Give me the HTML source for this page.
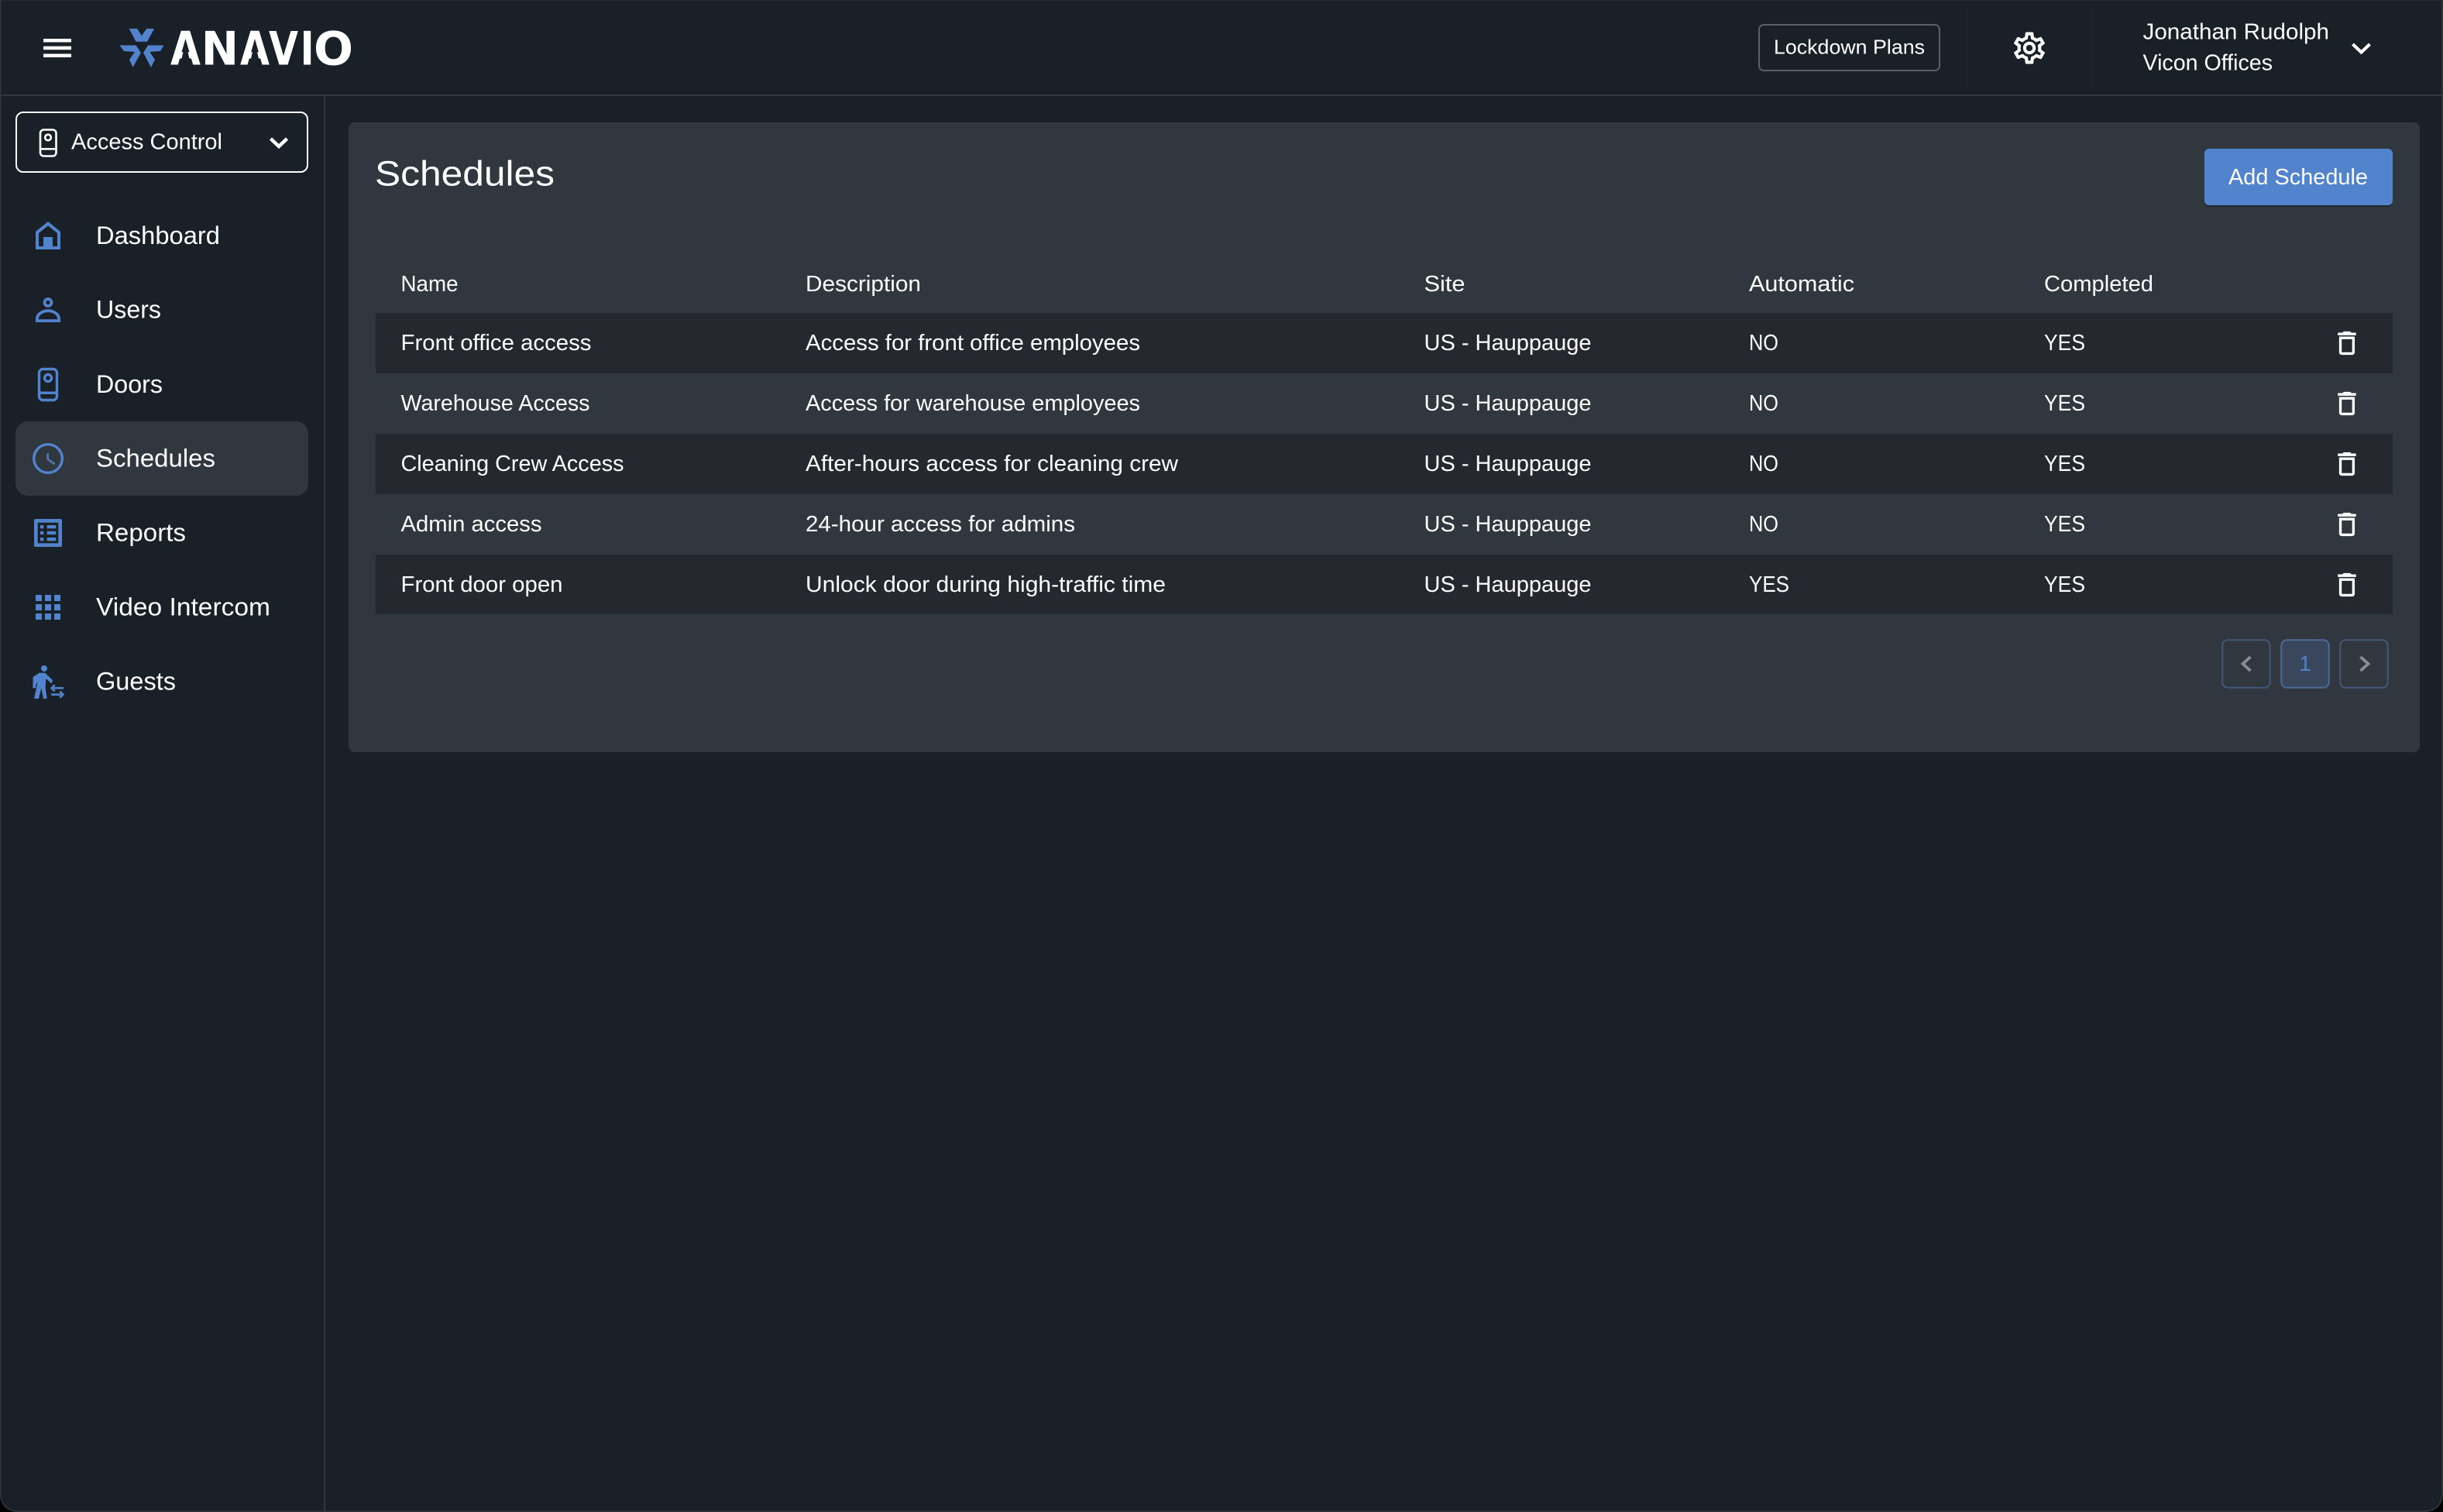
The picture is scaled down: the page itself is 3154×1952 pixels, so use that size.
<!DOCTYPE html>
<html lang="en">
<head>
<meta charset="utf-8">
<title>Anavio - Schedules</title>
<style>
html,body{margin:0;padding:0;background:#000;width:3154px;height:1952px;overflow:hidden}
svg{display:block}
text{font-family:"Liberation Sans",sans-serif;fill:#fff}
.t{font-size:28.5px}
.n{font-size:32px}
.logo text{font-family:"DejaVu Sans",sans-serif;font-weight:700;font-size:60px}
</style>
</head>
<body>
<svg xmlns="http://www.w3.org/2000/svg" width="3154" height="1952" viewBox="0 0 3154 1952">
<defs>
<path id="trash" d="M6 19c0 1.100.9 2 2 2h8c1.100 0 2-.9 2-2V7H6v12zM8 9h8v10H8V9zm7.500-5l-1-1h-5l-1 1H5v2h14V4z" fill="#fff"/>
</defs>

<!-- frame -->
<path d="M0 0H3154V1930a22 22 0 0 1-22 22H22a22 22 0 0 1-22-22Z" fill="#1a2028"/>
<path d="M.75 0V1930a21 21 0 0 0 21 21H3132a21 21 0 0 0 21-21V0" fill="none" stroke="#30363e" stroke-width="1.500"/>
<rect x="0" y="0" width="3154" height="1" fill="#242a32"/>
<rect x="0" y="122" width="3154" height="2" fill="#31373f"/>
<rect x="418" y="124" width="2" height="1828" fill="#30363e"/>
<rect x="2539" y="10" width="1" height="102" fill="#20262e"/>
<rect x="2700" y="10" width="1" height="102" fill="#20262e"/>

<!-- hamburger -->
<rect x="56" y="50" width="36" height="4.500" fill="#fff"/>
<rect x="56" y="59.700" width="36" height="4.500" fill="#fff"/>
<rect x="56" y="69.500" width="36" height="4.500" fill="#fff"/>

<!-- logo -->
<g fill="#5184cc">
<polygon points="166.700,37 177,37 183,46 189.300,37 199,37 190,53.700 175.500,53.700"/>
<polygon points="154.500,58.500 175.500,58.500 182,68 171.500,87 167,77 174,67 160,66"/>
<polygon points="211.500,58.500 191,58.500 185,68 195,87 200,77 193.300,67 207,66"/>
</g>
<g class="logo">
<text x="220" y="83.500" textLength="39" lengthAdjust="spacingAndGlyphs">A</text>
<text x="259.700" y="83.500" textLength="48.300" lengthAdjust="spacingAndGlyphs">N</text>
<text x="310" y="83.500" textLength="38" lengthAdjust="spacingAndGlyphs">A</text>
<text x="347" y="83.500" textLength="38" lengthAdjust="spacingAndGlyphs">V</text>
<text x="387.600" y="83.500" textLength="18" lengthAdjust="spacingAndGlyphs">I</text>
<text x="405" y="83.500" textLength="51" lengthAdjust="spacingAndGlyphs">O</text>
</g>
<polygon points="239.500,54 232.500,84.500 246.500,84.500" fill="#1a2028"/>
<polygon points="329,54 322,84.500 336,84.500" fill="#1a2028"/>

<!-- header right -->
<rect x="2271" y="32" width="233" height="59" rx="6" fill="none" stroke="#5c6066" stroke-width="2"/>
<text x="2290" y="69.500" style="font-size:26px" textLength="195" lengthAdjust="spacingAndGlyphs">Lockdown Plans</text>
<path transform="translate(2595.400,37.400) scale(2.050)" fill="#fff" d="M19.430 12.980c.04-.32.07-.64.07-.98 0-.34-.03-.66-.07-.98l2.110-1.650c.19-.15.24-.42.12-.64l-2-3.460c-.09-.16-.26-.25-.44-.25-.06 0-.12.01-.17.03l-2.490 1c-.52-.4-1.080-.73-1.690-.98l-.38-2.650C14.460 2.180 14.250 2 14 2h-4c-.25 0-.46.18-.49.42l-.38 2.650c-.61.25-1.170.59-1.690.98l-2.490-1c-.06-.02-.12-.03-.18-.03-.17 0-.34.09-.43.25l-2 3.460c-.13.22-.07.49.12.64l2.110 1.650c-.04.32-.07.65-.07.98 0 .33.03.66.07.98l-2.110 1.650c-.19.15-.24.42-.12.64l2 3.460c.09.16.26.25.44.25.06 0 .12-.01.17-.03l2.490-1c.52.4 1.080.73 1.690.98l.38 2.650c.03.24.24.42.49.42h4c.25 0 .46-.18.49-.42l.38-2.650c.61-.25 1.170-.59 1.690-.98l2.490 1c.06.02.12.03.18.03.17 0 .34-.09.43-.25l2-3.460c.12-.22.07-.49-.12-.64l-2.110-1.650zm-1.980-1.710c.04.31.05.52.05.73 0 .21-.02.43-.05.73l-.14 1.130.89.7 1.080.84-.7 1.210-1.270-.51-1.040-.42-.9.68c-.43.32-.84.56-1.250.73l-1.060.43-.16 1.130-.2 1.350h-1.400l-.19-1.350-.16-1.130-1.060-.43c-.43-.18-.83-.41-1.230-.71l-.91-.7-1.060.43-1.270.51-.7-1.210 1.080-.84.89-.7-.14-1.130c-.03-.31-.05-.54-.05-.74s.02-.43.05-.73l.14-1.130-.89-.7-1.080-.84.7-1.210 1.270.51 1.040.42.9-.68c.43-.32.84-.56 1.250-.73l1.060-.43.16-1.130.2-1.350h1.390l.19 1.350.16 1.130 1.060.43c.43.18.83.41 1.230.71l.91.7 1.060-.43 1.270-.51.7 1.210-1.070.85-.89.7.14 1.130zM12 8c-2.210 0-4 1.790-4 4s1.790 4 4 4 4-1.790 4-4-1.790-4-4-4zm0 6c-1.100 0-2-.9-2-2s.9-2 2-2 2 .9 2 2-.9 2-2 2z"/>
<text x="2766.500" y="50.500" class="t" textLength="240.500" lengthAdjust="spacingAndGlyphs">Jonathan Rudolph</text>
<text x="2766.500" y="90.500" class="t" textLength="167.500" lengthAdjust="spacingAndGlyphs">Vicon Offices</text>
<path d="M3037.500 57L3048.500 67.500L3059.500 57" fill="none" stroke="#fff" stroke-width="4.200"/>

<!-- module select -->
<rect x="21" y="145" width="376" height="77" rx="9" fill="#1a2028" stroke="#fff" stroke-width="2"/>
<rect x="52" y="167.500" width="20.500" height="34" rx="4.500" fill="none" stroke="#fff" stroke-width="2.600"/>
<circle cx="62" cy="177.500" r="3.800" fill="none" stroke="#fff" stroke-width="2.600"/>
<rect x="52" y="191" width="20.500" height="2.600" fill="#fff"/>
<text x="92" y="192.500" class="t" textLength="195" lengthAdjust="spacingAndGlyphs">Access Control</text>
<path d="M349.500 179L360 189L370.500 179" fill="none" stroke="#fff" stroke-width="4.500"/>

<!-- active item -->
<rect x="20" y="544" width="378" height="96" rx="16" fill="#31373f"/>

<!-- nav icons -->
<path fill="#5184cc" fill-rule="evenodd" d="M62 286L78 299V322H46V299ZM62 291.500L50 301V318H56V306H68V318H74V301Z"/>

<circle cx="62" cy="390.500" r="4.500" fill="none" stroke="#5184cc" stroke-width="3.800"/>
<path d="M47.900 414.100V411.500C47.900 404.500 56.500 401.200 62 401.200S76.100 404.500 76.100 411.500V414.100Z" fill="none" stroke="#5184cc" stroke-width="3.800"/>

<rect x="50.500" y="476.500" width="23" height="40" rx="5" fill="none" stroke="#5184cc" stroke-width="3.400"/>
<circle cx="62" cy="488" r="4.500" fill="none" stroke="#5184cc" stroke-width="3.400"/>
<rect x="50.500" y="505.500" width="23" height="3.400" fill="#5184cc"/>

<circle cx="62" cy="592" r="18.300" fill="none" stroke="#5184cc" stroke-width="3.400"/>
<path d="M61.700 585V593L70.700 599" fill="none" stroke="#4d7ab9" stroke-width="2.600"/>

<rect x="44" y="670" width="36" height="36" rx="2" fill="#5184cc"/>
<rect x="48.700" y="674.700" width="26.600" height="26.600" fill="#1a2028"/>
<g fill="#5184cc">
<rect x="52" y="678" width="4.300" height="4.300"/><rect x="60.700" y="678" width="11.600" height="4.300"/>
<rect x="52" y="685.800" width="4.300" height="4.300"/><rect x="60.700" y="685.800" width="11.600" height="4.300"/>
<rect x="52" y="694" width="4.300" height="4.300"/><rect x="60.700" y="694" width="11.600" height="4.300"/>
</g>

<g fill="#5184cc">
<rect x="46" y="768" width="8" height="8"/><rect x="58" y="768" width="8" height="8"/><rect x="70" y="768" width="8" height="8"/>
<rect x="46" y="780" width="8" height="8"/><rect x="58" y="780" width="8" height="8"/><rect x="70" y="780" width="8" height="8"/>
<rect x="46" y="792" width="8" height="8"/><rect x="58" y="792" width="8" height="8"/><rect x="70" y="792" width="8" height="8"/>
</g>

<g transform="translate(0,640) scale(.33333)">
<circle cx="171" cy="669" r="12" fill="#5184cc"/>
<polygon fill="#5184cc" points="128,702 152,686 174,686 205,715 199,727 178,708 176,745 182,786 168,786 160,745 150,786 132,786 146,722 139,732 139,745 127,745"/>
<path d="M246 745H208M212 733L200 745L212 757M198 770H236M232 758L244 770L232 782" fill="none" stroke="#5184cc" stroke-width="8"/>
</g>

<!-- nav labels -->
<text x="124" y="315" class="n" textLength="160" lengthAdjust="spacingAndGlyphs">Dashboard</text>
<text x="124" y="410.500" class="n" textLength="84" lengthAdjust="spacingAndGlyphs">Users</text>
<text x="124" y="507" class="n" textLength="86" lengthAdjust="spacingAndGlyphs">Doors</text>
<text x="124" y="602.500" class="n" textLength="154" lengthAdjust="spacingAndGlyphs">Schedules</text>
<text x="124" y="698.500" class="n" textLength="116" lengthAdjust="spacingAndGlyphs">Reports</text>
<text x="124" y="794.500" class="n" textLength="225" lengthAdjust="spacingAndGlyphs">Video Intercom</text>
<text x="124" y="890.500" class="n" textLength="103" lengthAdjust="spacingAndGlyphs">Guests</text>

<!-- card -->
<rect x="450" y="158" width="2674" height="813" rx="8" fill="#30373f"/>
<text x="484" y="239.500" style="font-size:45px" textLength="232" lengthAdjust="spacingAndGlyphs">Schedules</text>

<rect x="2846" y="194" width="243" height="73" rx="6" fill="#000" opacity=".28"/>
<rect x="2846" y="192" width="243" height="73" rx="6" fill="#5184cc"/>
<text x="2877" y="238" class="t" textLength="180" lengthAdjust="spacingAndGlyphs">Add Schedule</text>

<!-- table header -->
<text x="517.500" y="376" class="t" textLength="74" lengthAdjust="spacingAndGlyphs">Name</text>
<text x="1040" y="376" class="t" textLength="149" lengthAdjust="spacingAndGlyphs">Description</text>
<text x="1838.500" y="376" class="t" textLength="53" lengthAdjust="spacingAndGlyphs">Site</text>
<text x="2258" y="376" class="t" textLength="136" lengthAdjust="spacingAndGlyphs">Automatic</text>
<text x="2639" y="376" class="t" textLength="141" lengthAdjust="spacingAndGlyphs">Completed</text>

<!-- rows -->
<rect x="485" y="404" width="2604" height="78" fill="#25292f"/>
<rect x="485" y="560" width="2604" height="78" fill="#25292f"/>
<rect x="485" y="716" width="2604" height="77" fill="#25292f"/>

<text x="517.500" y="452" class="t" textLength="246" lengthAdjust="spacingAndGlyphs">Front office access</text>
<text x="1040" y="452" class="t" textLength="432" lengthAdjust="spacingAndGlyphs">Access for front office employees</text>
<text x="1838.500" y="452" class="t" textLength="216" lengthAdjust="spacingAndGlyphs">US - Hauppauge</text>
<text x="2258" y="452" class="t" textLength="38" lengthAdjust="spacingAndGlyphs">NO</text>
<text x="2639" y="452" class="t" textLength="53" lengthAdjust="spacingAndGlyphs">YES</text>
<use href="#trash" transform="translate(3009.800,422.800) scale(1.680)"/>

<text x="517.500" y="530" class="t" textLength="244" lengthAdjust="spacingAndGlyphs">Warehouse Access</text>
<text x="1040" y="530" class="t" textLength="432" lengthAdjust="spacingAndGlyphs">Access for warehouse employees</text>
<text x="1838.500" y="530" class="t" textLength="216" lengthAdjust="spacingAndGlyphs">US - Hauppauge</text>
<text x="2258" y="530" class="t" textLength="38" lengthAdjust="spacingAndGlyphs">NO</text>
<text x="2639" y="530" class="t" textLength="53" lengthAdjust="spacingAndGlyphs">YES</text>
<use href="#trash" transform="translate(3009.800,500.800) scale(1.680)"/>

<text x="517.500" y="608" class="t" textLength="288" lengthAdjust="spacingAndGlyphs">Cleaning Crew Access</text>
<text x="1040" y="608" class="t" textLength="481" lengthAdjust="spacingAndGlyphs">After-hours access for cleaning crew</text>
<text x="1838.500" y="608" class="t" textLength="216" lengthAdjust="spacingAndGlyphs">US - Hauppauge</text>
<text x="2258" y="608" class="t" textLength="38" lengthAdjust="spacingAndGlyphs">NO</text>
<text x="2639" y="608" class="t" textLength="53" lengthAdjust="spacingAndGlyphs">YES</text>
<use href="#trash" transform="translate(3009.800,578.800) scale(1.680)"/>

<text x="517.500" y="686" class="t" textLength="182" lengthAdjust="spacingAndGlyphs">Admin access</text>
<text x="1040" y="686" class="t" textLength="348" lengthAdjust="spacingAndGlyphs">24-hour access for admins</text>
<text x="1838.500" y="686" class="t" textLength="216" lengthAdjust="spacingAndGlyphs">US - Hauppauge</text>
<text x="2258" y="686" class="t" textLength="38" lengthAdjust="spacingAndGlyphs">NO</text>
<text x="2639" y="686" class="t" textLength="53" lengthAdjust="spacingAndGlyphs">YES</text>
<use href="#trash" transform="translate(3009.800,656.800) scale(1.680)"/>

<text x="517.500" y="764" class="t" textLength="209" lengthAdjust="spacingAndGlyphs">Front door open</text>
<text x="1040" y="764" class="t" textLength="465" lengthAdjust="spacingAndGlyphs">Unlock door during high-traffic time</text>
<text x="1838.500" y="764" class="t" textLength="216" lengthAdjust="spacingAndGlyphs">US - Hauppauge</text>
<text x="2258" y="764" class="t" textLength="52" lengthAdjust="spacingAndGlyphs">YES</text>
<text x="2639" y="764" class="t" textLength="53" lengthAdjust="spacingAndGlyphs">YES</text>
<use href="#trash" transform="translate(3009.800,734.800) scale(1.680)"/>

<!-- pagination -->
<rect x="2869.300" y="826.300" width="61.400" height="61.400" rx="7" fill="none" stroke="#43597a" stroke-width="2"/>
<path d="M2905.500 848L2895.500 857L2905.500 866" fill="none" stroke="#8a8d91" stroke-width="3.800"/>
<rect x="2945.300" y="826.300" width="61.400" height="61.400" rx="7" fill="#38475b" stroke="#4a6a9a" stroke-width="2"/>
<text x="2976" y="866" text-anchor="middle" style="font-size:28px;fill:#5184cc">1</text>
<rect x="3021.300" y="826.300" width="61.400" height="61.400" rx="7" fill="none" stroke="#43597a" stroke-width="2"/>
<path d="M3047.500 848L3057.500 857L3047.500 866" fill="none" stroke="#8a8d91" stroke-width="3.800"/>
</svg>
</body>
</html>
